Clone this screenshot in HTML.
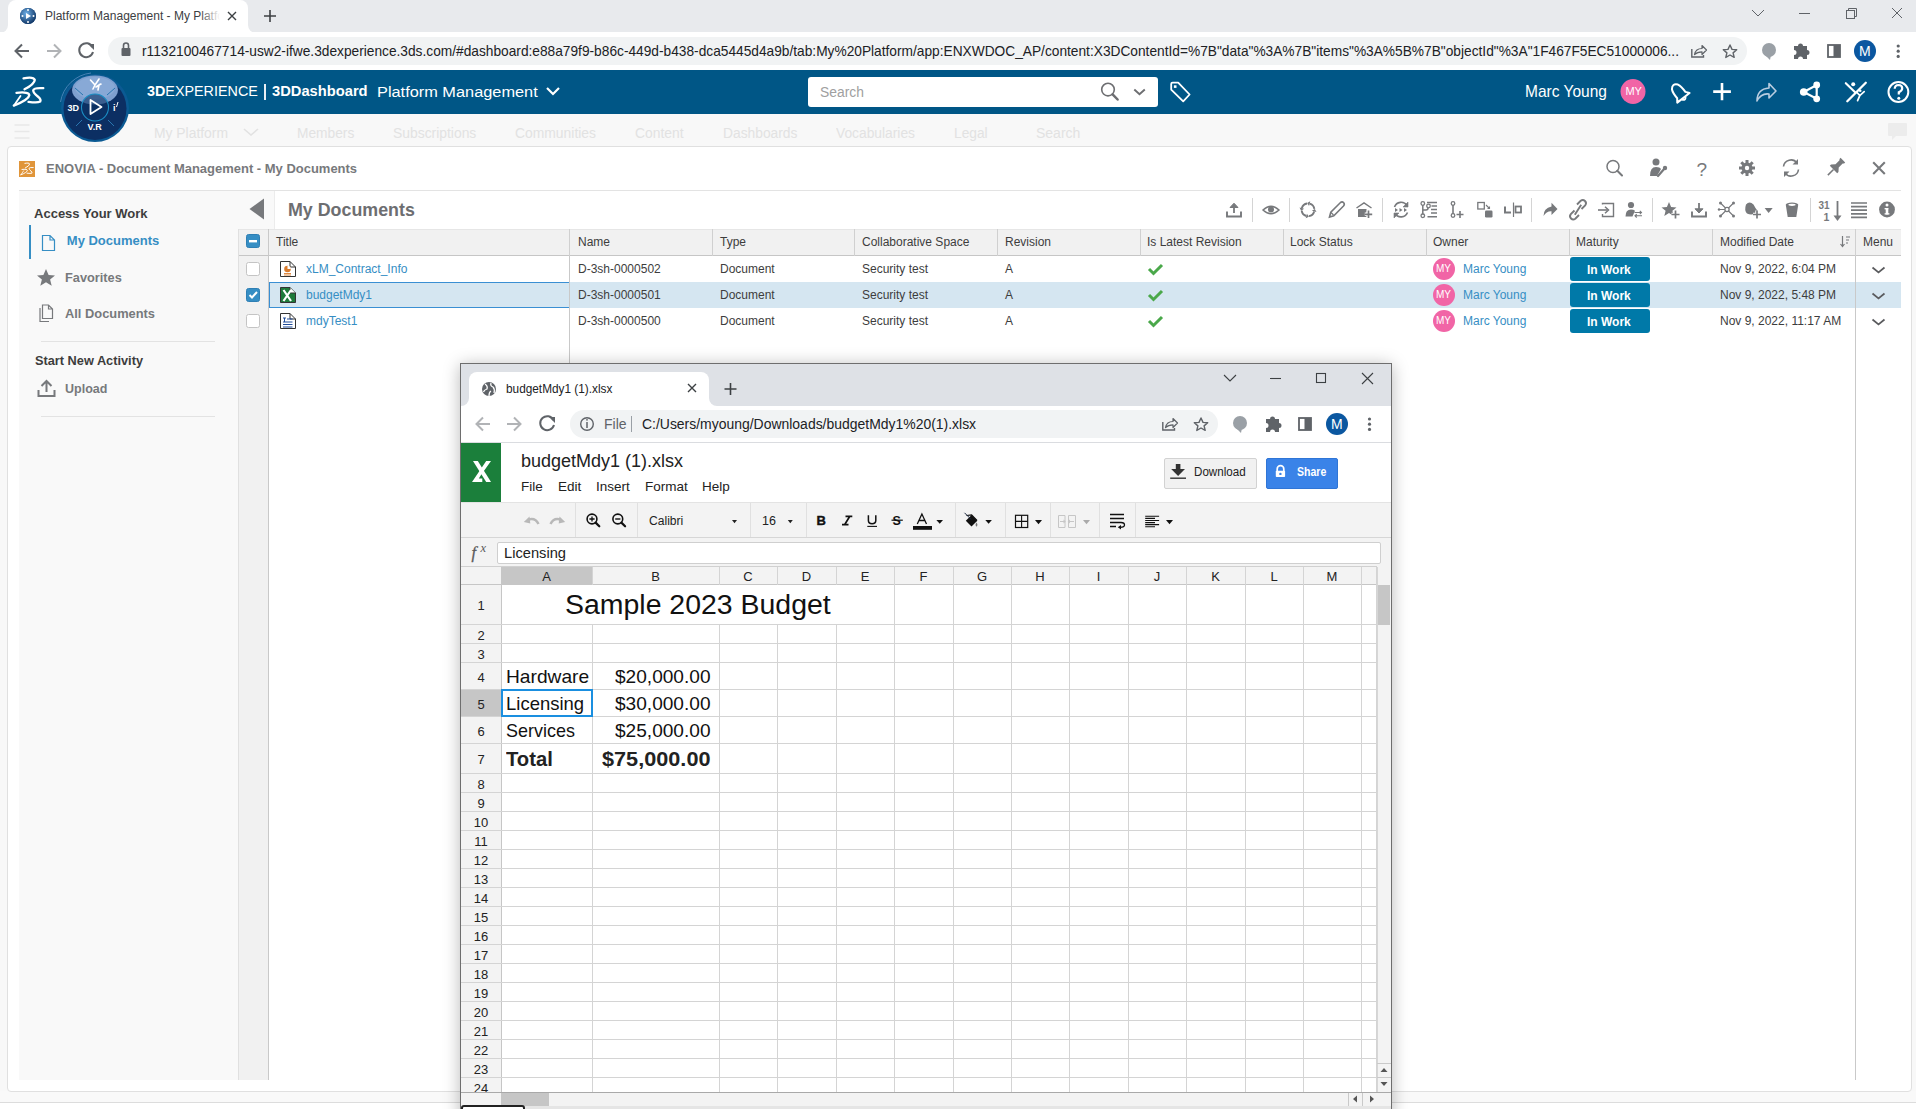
<!DOCTYPE html>
<html><head><meta charset="utf-8">
<style>
*{box-sizing:border-box;margin:0;padding:0}
html,body{width:1916px;height:1109px;overflow:hidden;background:#f8f8f8;font-family:"Liberation Sans",sans-serif;position:relative}
.a{position:absolute}
svg{position:absolute;overflow:visible}
.t{position:absolute;white-space:nowrap;line-height:1}
</style></head><body>
<!-- ============ CHROME MAIN ============ -->
<div class="a" style="left:0;top:0;width:1916px;height:33px;background:#fff"></div>
<div class="a" style="left:0;top:0;width:1916px;height:12px;background:#e8eaed"></div>
<div class="a" style="left:0;top:0;width:8px;height:33px;background:#e8eaed;border-radius:0 0 8px 0"></div>
<div class="a" style="left:248px;top:0;width:1668px;height:33px;background:#e8eaed;border-radius:0 0 0 8px"></div>
<div class="a" style="left:8px;top:0;width:240px;height:33px;background:#fff;border-radius:8px 8px 0 0"></div>
<div class="a" style="left:0;top:32px;width:1916px;height:38px;background:#fff"></div>
<div class="a" style="left:108px;top:37px;width:1639px;height:28px;background:#f1f3f4;border-radius:14px"></div>
<svg style="left:0;top:0" width="1916" height="70">
 <!-- favicon -->
 <circle cx="28" cy="16" r="8" fill="#1b4f8a"/><circle cx="28" cy="16" r="8" fill="url(#fg)"/>
 <defs><radialGradient id="fg" cx="0.4" cy="0.35" r="0.7"><stop offset="0" stop-color="#6fb0e8"/><stop offset="1" stop-color="#0b2f5e" stop-opacity="1"/></radialGradient></defs>
 <path d="M26 13 L31 16 L26 19 Z" fill="#fff"/>
 <circle cx="28" cy="10" r="1" fill="#fff"/><circle cx="28" cy="22" r="1" fill="#fff"/><circle cx="22.5" cy="16" r="1" fill="#fff"/><circle cx="33.5" cy="16" r="1" fill="#fff"/>
 <!-- tab close -->
 <path d="M228 12 L236 20 M236 12 L228 20" stroke="#3c4043" stroke-width="1.4"/>
 <!-- new tab + -->
 <path d="M270 10 V22 M264 16 H276" stroke="#3c4043" stroke-width="1.6"/>
 <!-- window controls -->
 <path d="M1752 10 L1758 16 L1764 10" stroke="#5f6368" stroke-width="1" fill="none"/>
 <path d="M1799 13.5 H1810" stroke="#5f6368" stroke-width="1"/>
 <rect x="1846.5" y="10.5" width="8" height="8" fill="none" stroke="#5f6368"/><path d="M1848.5 10.5 V8.5 H1856.5 V16.5 H1854.5" fill="none" stroke="#5f6368"/>
 <path d="M1892 8 L1902 18 M1902 8 L1892 18" stroke="#5f6368" stroke-width="1"/>
 <!-- back/fwd/reload -->
 <path d="M29 51 H16 M22 44.5 L15.5 51 L22 57.5" stroke="#5f6368" stroke-width="2" fill="none"/>
 <path d="M47 51 H60 M54 44.5 L60.5 51 L54 57.5" stroke="#b1b3b6" stroke-width="2" fill="none"/>
 <path d="M92.5 47 A7 7 0 1 0 93 52" stroke="#5f6368" stroke-width="2" fill="none"/><path d="M88 44 L94 44 L94 50 Z" fill="#5f6368"/>
 <!-- lock -->
 <rect x="121.5" y="48" width="9" height="8" rx="1" fill="#5f6368"/><path d="M123.5 48 V45.5 A2.5 2.5 0 0 1 128.5 45.5 V48" stroke="#5f6368" stroke-width="1.6" fill="none"/>
 <!-- share icon in omnibox -->
 <path d="M1691.8 49 V57 H1703.5 V55" stroke="#5f6368" stroke-width="1.4" fill="none"/><path d="M1694.5 54.5 C1695.5 49.5 1698.5 48.5 1702 48.5 V45.5 L1706.5 50 L1702 54.5 V51.8 C1698.8 51.8 1696.5 52.6 1694.5 54.5 Z" stroke="#5f6368" stroke-width="1.2" fill="none" stroke-linejoin="round"/>
 <!-- star -->
 <path d="M1730 45 L1732 49.4 L1736.7 49.8 L1733.1 52.9 L1734.2 57.4 L1730 55 L1725.8 57.4 L1726.9 52.9 L1723.3 49.8 L1728 49.4 Z" stroke="#5f6368" stroke-width="1.4" fill="none" stroke-linejoin="round"/>
 <!-- ext grey bubble -->
 <circle cx="1769" cy="50" r="7" fill="#9aa0a6"/><path d="M1765 55 L1770 60 L1771 55Z" fill="#9aa0a6"/>
 <!-- puzzle -->
 <path d="M1794 46 H1798 A2.5 2.5 0 0 1 1803 46 H1807 V50 A2.5 2.5 0 0 1 1807 55 V59 H1803 A2.5 2.5 0 0 0 1798 59 H1794 V55 A2.5 2.5 0 0 0 1794 50 Z" fill="#5f6368"/>
 <!-- sidebar -->
 <rect x="1828" y="45" width="12" height="12" fill="none" stroke="#5f6368" stroke-width="1.8"/><rect x="1833.5" y="45" width="6.5" height="12" fill="#5f6368"/>
 <!-- avatar -->
 <circle cx="1865" cy="51" r="11" fill="#0b57a0"/>
 <!-- dots -->
 <circle cx="1898.2" cy="46" r="1.6" fill="#5f6368"/><circle cx="1898.2" cy="51.2" r="1.6" fill="#5f6368"/><circle cx="1898.2" cy="56.4" r="1.6" fill="#5f6368"/>
</svg>
<div class="a" style="left:0;top:6px;width:220px;height:20px;overflow:hidden"><div class="t" style="left:44.5px;top:4px;font-size:12.5px;color:#3c4043;transform:scaleX(0.9613);transform-origin:0 0">Platform Management - My Platform</div></div>
<div class="a" style="left:200px;top:4px;width:20px;height:24px;background:linear-gradient(90deg,rgba(255,255,255,0),#fff)"></div>
<div class="t" style="left:1859px;top:44px;font-size:14px;color:#fff">M</div>
<div class="t" id="url" style="left:142px;top:43px;font-size:15px;color:#202124;transform:scaleX(0.9148);transform-origin:0 0">r1132100467714-usw2-ifwe.3dexperience.3ds.com/#dashboard:e88a79f9-b86c-449d-b438-dca5445d4a9b/tab:My%20Platform/app:ENXWDOC_AP/content:X3DContentId=%7B"data"%3A%7B"items"%3A%5B%7B"objectId"%3A"1F467F5EC51000006...</div>
<!-- ============ 3DS HEADER ============ -->
<div class="a" style="left:0;top:70px;width:1916px;height:44px;background:#005686"></div>
<div class="a" style="left:0;top:114px;width:1916px;height:32px;background:#f8f8f8"></div>
<div class="a" style="left:808px;top:77px;width:350px;height:30px;background:#fff;border-radius:3px"></div>
<svg style="left:0;top:0" width="1916" height="150">
 <!-- DS logo -->
 <g fill="none" stroke="#fff" stroke-linecap="round">
 <path d="M23.5 78.3 Q33.5 76.3 34.8 79.8 Q34.5 84 24.5 89.3" stroke-width="2.3"/>
 <path d="M16.5 92.8 Q29.5 91.5 29.3 95.3 Q28.5 100 13.8 105.6" stroke-width="2.3"/>
 <path d="M20.5 96 L14 105.4" stroke-width="1.8"/>
 <path d="M43.3 88.2 Q34 87.5 33.2 90.3 Q33.3 93 37.8 96.5 Q41.5 99.5 40.2 101.6 Q37.5 103 28.5 101.8" stroke-width="2.3"/>
 </g>
 <!-- compass -->
 <circle cx="95" cy="108" r="34" fill="#0b5a93"/>
 <path d="M60.5 102 A35 35 0 0 1 91 73" stroke="#4f86bb" stroke-width=".9" fill="none"/>
 <circle cx="95" cy="108.5" r="31.5" fill="#0c2f63"/>
 <ellipse cx="95" cy="90" rx="23" ry="14.5" fill="#7e9fcf"/>
 <ellipse cx="95" cy="88" rx="20" ry="11" fill="#8fb0da" opacity=".6"/>
 <circle cx="95" cy="107.5" r="13.5" fill="rgba(12,50,100,.6)" stroke="#1b8ec4" stroke-width="1.1"/>
 <path d="M90.5 100 L101.5 107 L90.5 114 Z" fill="none" stroke="#fff" stroke-width="1.8" stroke-linejoin="round"/>
 <path d="M75 88 L83 95 M115 88 L107 95 M76 126 L82 120 M114 126 L108 120" stroke="#2a76b0" stroke-width="1"/>
 <text x="67.5" y="111" font-family="Liberation Sans" font-weight="bold" font-size="9" fill="#fff">3D</text>
 <text x="113" y="111" font-family="Liberation Sans" font-weight="bold" font-size="9" fill="#fff">i</text>
 <path d="M118 102 L116.5 107" stroke="#fff" stroke-width="1"/>
 <text x="87.5" y="130" font-family="Liberation Sans" font-weight="bold" font-size="9" fill="#fff">V.R</text>
 <path d="M90.5 80 L95 85 L93 89 M95 85 L99 79 M96 87 L99 85 L98 90 M99 85 L101 84" stroke="#fff" stroke-width="1.6" fill="none" stroke-linecap="round"/>
 <!-- header chevron -->
 <path d="M547 88 L553 94 L559 88" stroke="#fff" stroke-width="2.2" fill="none"/>
 <!-- search icons -->
 <circle cx="1108" cy="89.6" r="6.3" stroke="#6d6e71" stroke-width="1.6" fill="none"/><path d="M1112.6 94.3 L1117.6 99.5" stroke="#6d6e71" stroke-width="2.5" stroke-linecap="round"/>
 <path d="M1134.3 89.5 L1139.5 94.3 L1144.8 89.5" stroke="#6d6e71" stroke-width="1.9" fill="none"/>
 <!-- tag -->
 <path d="M1171.2 84 Q1171.2 82.6 1172.6 82.6 L1178.2 82.6 L1189.6 94.5 L1183.2 101.3 L1171.2 89.6 Z" stroke="#fff" stroke-width="1.8" fill="none" stroke-linejoin="round"/>
 <rect x="1173.9" y="85.3" width="2.6" height="2.6" fill="#fff"/>
 <!-- MY avatar -->
 <circle cx="1633" cy="91.5" r="12.5" fill="#f165a6"/>
 <!-- bell -->
 <g transform="translate(1678.5 91.5) rotate(-38)"><path d="M-5.2 4.5 Q-5.5 -2.5 -3.8 -5.8 Q0 -10.5 3.8 -5.8 Q5.5 -2.5 5.2 4.5 L7.8 8 H-7.8 Z" stroke="#fff" stroke-width="2" fill="none" stroke-linejoin="round"/><path d="M-2.3 8.5 Q0 12 2.3 8.5" stroke="#fff" stroke-width="1.8" fill="none"/></g>
 <!-- plus -->
 <path d="M1722 83 V100.2 M1713.2 91.6 H1730.9" stroke="#fff" stroke-width="2.6"/>
 <!-- forward arrow (faded) -->
 <path d="M1757 101 Q1757 89 1769 88 V83.5 L1776 91 L1769 98 V94 Q1761 93 1757 101Z" stroke="#b9cde0" stroke-width="1.6" fill="none" stroke-linejoin="round"/>
 <!-- share -->
 <path d="M1803.7 92 L1816.7 85 L1816.7 98.8 Z" stroke="#fff" stroke-width="2.2" fill="none"/>
 <circle cx="1803.7" cy="92" r="3.8" fill="#fff"/><circle cx="1816.7" cy="85" r="3.4" fill="#fff"/><circle cx="1816.7" cy="98.8" r="3.4" fill="#fff"/>
 <!-- compass person -->
 <path d="M1865.8 82.8 L1847.3 101.2" stroke="#fff" stroke-width="2.3" stroke-linecap="round"/>
 <path d="M1845.8 83.2 L1855.6 92.8" stroke="#fff" stroke-width="2.1" stroke-linecap="round"/>
 <circle cx="1853.2" cy="84.2" r="2" fill="#fff"/>
 <path d="M1856.8 92.2 L1859.8 95.6 L1864.2 91.6 M1859.8 95.6 L1857.6 100.6" stroke="#fff" stroke-width="1.7" fill="none" stroke-linecap="round"/>
 <circle cx="1860.2" cy="90.8" r="1.3" fill="#fff"/>
 <!-- help -->
 <circle cx="1898.4" cy="92" r="9.9" stroke="#fff" stroke-width="2" fill="none"/>
 <path d="M1894.7 88.8 Q1894.9 85 1898.5 85 Q1902.2 85.1 1902.2 88.3 Q1902.2 90.8 1898.8 92.3 V94.6" stroke="#fff" stroke-width="2.2" fill="none"/>
 <circle cx="1898.8" cy="98.2" r="1.5" fill="#fff"/>
 <!-- nav hamburger faded -->
 <path d="M14.5 125 H29.5 M14.5 131.5 H29.5 M14.5 138 H29.5" stroke="#e8e8e8" stroke-width="1.6"/>
 <path d="M244 129 L251 135 L258 129" stroke="#e2e2e2" stroke-width="1.6" fill="none"/>
 <!-- comment icon right -->
 <rect x="1888" y="123" width="19" height="13" rx="1" fill="#ececec"/><path d="M1892 136 L1892 140 L1896 136" fill="#ececec"/>
</svg>
<div class="t" style="left:146.7px;top:83px;font-size:15.5px;color:#fff;transform:scaleX(0.9253);transform-origin:0 0"><b>3D</b>EXPERIENCE</div>
<div class="a" style="left:264px;top:84px;width:2px;height:16px;background:#e8eef4"></div>
<div class="t" style="left:271.8px;top:83px;font-size:15.5px;color:#fff;transform:scaleX(0.9486);transform-origin:0 0"><b>3DDashboard</b></div>
<div class="t" style="left:376.5px;top:84px;font-size:15.5px;color:#fff;transform:scaleX(1.0538);transform-origin:0 0">Platform Management</div>
<div class="t" style="left:819.6px;top:85px;font-size:14px;color:#a0a0a0;transform:scaleX(0.9896);transform-origin:0 0">Search</div>
<div class="t" style="left:1524.5px;top:83px;font-size:17px;color:#fff;transform:scaleX(0.9121);transform-origin:0 0">Marc Young</div>
<div class="t" style="left:1625.4px;top:86px;font-size:11px;color:#fff;transform:scaleX(1.0000);transform-origin:0 0">MY</div>
<div class="t" style="left:154px;top:126px;font-size:14px;color:#e2e2e2;transform:scaleX(0.9908);transform-origin:0 0">My Platform</div>
<div class="t" style="left:296.7px;top:126px;font-size:14px;color:#e2e2e2;transform:scaleX(0.9818);transform-origin:0 0">Members</div>
<div class="t" style="left:392.7px;top:126px;font-size:14px;color:#e2e2e2;transform:scaleX(0.9911);transform-origin:0 0">Subscriptions</div>
<div class="t" style="left:515px;top:126px;font-size:14px;color:#e2e2e2;transform:scaleX(0.9914);transform-origin:0 0">Communities</div>
<div class="t" style="left:635px;top:126px;font-size:14px;color:#e2e2e2;transform:scaleX(0.9888);transform-origin:0 0">Content</div>
<div class="t" style="left:722.6px;top:126px;font-size:14px;color:#e2e2e2;transform:scaleX(0.9854);transform-origin:0 0">Dashboards</div>
<div class="t" style="left:836px;top:126px;font-size:14px;color:#e2e2e2;transform:scaleX(0.9854);transform-origin:0 0">Vocabularies</div>
<div class="t" style="left:954px;top:126px;font-size:14px;color:#e2e2e2;transform:scaleX(0.9806);transform-origin:0 0">Legal</div>
<div class="t" style="left:1036px;top:126px;font-size:14px;color:#e2e2e2">Search</div>
<!-- ============ WIDGET CARD ============ -->
<div class="a" style="left:0;top:1091px;width:1916px;height:18px;background:#f9f9f9;border-top:0"></div>
<div class="a" style="left:0;top:1102px;width:1916px;height:7px;background:#fff;border-top:1px solid #dcdcdc"></div>
<div class="a" style="left:7px;top:146px;width:1905px;height:946px;background:#fff;border:1px solid #e0e0e0;border-radius:4px"></div>
<div class="a" style="left:19px;top:190px;width:1882px;height:1px;background:#e3e3e3"></div>
<!-- left nav -->
<div class="a" style="left:19px;top:191px;width:219px;height:889px;background:#f9f9f9"></div>
<div class="a" style="left:238px;top:191px;width:37px;height:38px;background:#f9f9f9;border-right:1px solid #ececec"></div>
<div class="a" style="left:238px;top:229px;width:31px;height:851px;background:#f1f1f1;border-right:1px solid #c9c9c9;border-left:1px solid #e0e0e0"></div>
<div class="a" style="left:29px;top:225px;width:2px;height:34px;background:#368ec4"></div>
<div class="a" style="left:41px;top:341px;width:174px;height:1px;background:#e3e3e3"></div>
<div class="a" style="left:41px;top:416px;width:174px;height:1px;background:#e3e3e3"></div>
<div class="t" style="left:33.9px;top:207px;font-size:13px;font-weight:bold;color:#3d3d3d;transform:scaleX(1.0013);transform-origin:0 0">Access Your Work</div>
<div class="t" style="left:66.8px;top:234px;font-size:13px;font-weight:bold;color:#368ec4">My Documents</div>
<div class="t" style="left:64.9px;top:271px;font-size:13px;font-weight:bold;color:#77797c;transform:scaleX(0.9825);transform-origin:0 0">Favorites</div>
<div class="t" style="left:65px;top:307px;font-size:13px;font-weight:bold;color:#77797c;transform:scaleX(0.9888);transform-origin:0 0">All Documents</div>
<div class="t" style="left:35.3px;top:354px;font-size:13px;font-weight:bold;color:#3d3d3d;transform:scaleX(0.9813);transform-origin:0 0">Start New Activity</div>
<div class="t" style="left:65px;top:382px;font-size:13px;font-weight:bold;color:#77797c;transform:scaleX(0.9623);transform-origin:0 0">Upload</div>
<div class="t" style="left:46.2px;top:162px;font-size:13px;font-weight:bold;color:#77797c;transform:scaleX(0.9985);transform-origin:0 0">ENOVIA - Document Management - My Documents</div>
<div class="t" style="left:287.5px;top:201px;font-size:18px;font-weight:bold;color:#6d6e71;transform:scaleX(0.9904);transform-origin:0 0">My&nbsp;Documents</div>
<svg style="left:0;top:0" width="1916" height="440">
 <!-- enovia icon -->
 <rect x="19" y="161" width="16" height="16" fill="#e0953a"/>
 <g fill="none" stroke="#fff" stroke-linecap="round" transform="translate(20.5 162.8) scale(0.42) translate(-13 -77)">
 <path d="M23.5 78.3 Q33.5 76.3 34.8 79.8 Q34.5 84 24.5 89.3" stroke-width="2.3"/>
 <path d="M16.5 92.8 Q29.5 91.5 29.3 95.3 Q28.5 100 13.8 105.6" stroke-width="2.3"/>
 <path d="M20.5 96 L14 105.4" stroke-width="1.8"/>
 <path d="M43.3 88.2 Q34 87.5 33.2 90.3 Q33.3 93 37.8 96.5 Q41.5 99.5 40.2 101.6 Q37.5 103 28.5 101.8" stroke-width="2.3"/>
 </g>
 <!-- my doc icon -->
 <path d="M42.5 235.5 H50 L54.5 240 V250.5 H42.5 Z M50 235.5 V240 H54.5" stroke="#368ec4" stroke-width="1.2" fill="none"/>
 <!-- star -->
 <path d="M46 269 L48.6 275 L55 275.4 L50.1 279.5 L51.7 285.8 L46 282.3 L40.3 285.8 L41.9 279.5 L37 275.4 L43.4 275 Z" fill="#77797c"/>
 <!-- all docs -->
 <path d="M42.5 305 H48.5 L52.5 309 V318.5 H42.5 Z M48.5 305 V309 H52.5" stroke="#77797c" stroke-width="1.2" fill="none"/>
 <path d="M40 308 V321.5 H49" stroke="#77797c" stroke-width="1.2" fill="none"/>
 <!-- upload -->
 <path d="M46.5 381 V392 M41.5 386 L46.5 381 L51.5 386" stroke="#77797c" stroke-width="2" fill="none"/>
 <path d="M38.5 390 V396 H54.5 V390" stroke="#77797c" stroke-width="2" fill="none"/>
 <!-- collapse triangle -->
 <path d="M264 198.5 V219.5 L249.5 209 Z" fill="#77797c"/>
 <!-- header right icons -->
 <circle cx="1613" cy="166.5" r="6" stroke="#77797c" stroke-width="1.5" fill="none"/><path d="M1617.3 170.8 L1622 175.5" stroke="#77797c" stroke-width="2" stroke-linecap="round"/>
 <circle cx="1656" cy="162" r="3.5" fill="#77797c"/><path d="M1650 176 Q1650 167 1656 167 Q1660 167 1661 169 L1657 176 Z" fill="#77797c"/><path d="M1658 176 L1665 168" stroke="#77797c" stroke-width="2.2" stroke-linecap="round"/><circle cx="1665" cy="168" r="2.2" fill="#77797c"/>
 <text x="1696.5" y="176" font-family="Liberation Sans" font-size="19" fill="#77797c">?</text>
 <g transform="translate(1747 168)"><circle r="5.5" fill="#77797c"/><circle r="2.2" fill="#fff"/><path d="M0 -8 V8 M-8 0 H8 M-5.7 -5.7 L5.7 5.7 M-5.7 5.7 L5.7 -5.7" stroke="#77797c" stroke-width="3"/><circle r="2.2" fill="#fff"/></g>
 <path d="M1783.5 166.5 A7.5 7.5 0 0 1 1797 163 M1798.5 169.5 A7.5 7.5 0 0 1 1785 173" stroke="#77797c" stroke-width="1.6" fill="none"/><path d="M1798 159 V164.5 H1792.5Z M1784 177 V171.5 H1789.5Z" fill="#77797c"/>
 <g transform="translate(1835.8 167.2) rotate(45) scale(1.25)"><path d="M-2.6 -8 H2.6 V-6.8 L1.8 -6 V-1.5 L4.2 1.2 V2.6 H-4.2 V1.2 L-1.8 -1.5 V-6 L-2.6 -6.8 Z" fill="#77797c"/><path d="M0 2.6 V9" stroke="#77797c" stroke-width="1.2"/></g>
 <path d="M1873.2 162.3 L1884.8 173.9 M1884.8 162.3 L1873.2 173.9" stroke="#77797c" stroke-width="2.1"/>
 <!-- toolbar separators -->
 <path d="M1252.5 198 V222 M1289.5 198 V222 M1382.5 198 V222 M1531.5 198 V222 M1652.5 198 V222 M1810.5 198 V222" stroke="#d4d4d4" stroke-width="1"/>
 <g fill="none" stroke="#77797c" stroke-width="1.8">
  <!-- upload -->
  <path d="M1234 205 V213"/><path d="M1230 207.5 L1234 203.2 L1238 207.5Z" fill="#77797c" stroke-width="1"/><path d="M1227 211.5 V216.5 H1241 V211.5" stroke-width="1.9"/>
  <!-- eye -->
  <path d="M1263 210 Q1271 202.5 1279 210 Q1271 217.5 1263 210Z" stroke-width="1.5"/><circle cx="1271" cy="209.5" r="3" fill="#77797c" stroke="none"/>
  <!-- sync ring -->
  <path d="M1301.82 208.14 A6.4 6.4 0 0 1 1307.11 203.46 M1309.66 203.62 A6.4 6.4 0 0 1 1314.34 208.91 M1314.18 211.46 A6.4 6.4 0 0 1 1308.89 216.14 M1306.34 215.98 A6.4 6.4 0 0 1 1301.66 210.69" stroke-width="1.9"/><path d="M1301.15 210.65 L1299.50 207.52 L1304.14 208.76Z M1307.15 202.95 L1310.28 201.30 L1309.04 205.94Z M1314.85 208.95 L1316.50 212.08 L1311.86 210.84Z M1308.85 216.65 L1305.72 218.30 L1306.96 213.66Z" fill="#77797c" stroke="none"/>
  <!-- pencil -->
  <path d="M1329.5 217 L1330.8 212.2 L1340.5 202.5 Q1342.2 201.2 1343.7 202.8 Q1345 204.3 1343.5 206 L1333.8 215.7 Z" stroke-width="1.6"/><path d="M1331 212.5 L1333.5 215" stroke-width="1.2"/>
  <!-- house+ -->
  <path d="M1356.5 208 L1364 202.8 L1371.5 208" stroke-width="1.4"/><rect x="1358" y="209" width="8.5" height="8" fill="#77797c" stroke="none"/><path d="M1368.5 210.5 V218 M1364.8 214.3 H1372.2" stroke="#fff" stroke-width="3.6"/><path d="M1368.5 210.5 V218 M1364.8 214.3 H1372.2" stroke-width="1.7"/>
  <!-- refresh dots -->
  <path d="M1394.5 207 A7 7 0 0 1 1407 205.5 M1407.5 212.5 A7 7 0 0 1 1395 213.5" stroke-width="1.6"/><path d="M1408 202 V207 H1403Z M1394 218 V213 H1399Z" fill="#77797c" stroke-width=".6"/>
  <path d="M1395 208 L1398 210 L1395 212Z M1399.5 208 L1402.5 210 L1399.5 212Z M1404 208 L1407 210 L1404 212Z" fill="#77797c" stroke="none"/>
  <!-- tree -->
  <path d="M1422.8 205 V214.5 M1422.8 210 H1426 Q1428 210 1428 208" stroke-width="1.5"/><circle cx="1422.8" cy="203.5" r="1.8" stroke-width="1.3" fill="#fff"/><circle cx="1422.8" cy="215.8" r="1.8" stroke-width="1.3" fill="#fff"/><circle cx="1428.5" cy="206" r="1.8" stroke-width="1.3" fill="#fff"/>
  <path d="M1427 202.5 H1437 M1431.5 206 H1437 M1431 209.5 H1437 M1431 213 H1437 M1427.5 216.8 H1437" stroke-width="1.5"/>
  <!-- branch -->
  <path d="M1453 205 V214.5" stroke-width="1.6"/><circle cx="1453" cy="203.5" r="1.8" stroke-width="1.3" fill="#fff"/><circle cx="1453" cy="215.5" r="1.8" stroke-width="1.3" fill="#fff"/><path d="M1460 211 V218 M1456.5 214.5 H1463.5" stroke-width="1.6"/>
  <!-- squares -->
  <rect x="1477.8" y="202.5" width="6.5" height="6.5" stroke-width="1.3"/><rect x="1485" y="210.5" width="7.5" height="7" fill="#77797c" stroke="none" rx="1.2"/><path d="M1486 205 L1489.5 208.5 M1489.5 206.5 V208.5 H1487.5" stroke-width="1.1"/>
  <!-- split -->
  <path d="M1513.5 202.5 V217" stroke-width="1.2"/><path d="M1505 206.5 V212.5 H1511" stroke-width="2"/><rect x="1515.5" y="206.5" width="5.5" height="6" stroke-width="1.8"/>
  <!-- arrow -->
  <path d="M1543.5 216 Q1543.5 208 1551.5 206.5 V202.8 L1557.5 209 L1551.5 215 V211.3 Q1546.5 211 1543.5 216Z" fill="#77797c" stroke="none"/>
  <!-- link -->
  <path d="M1574.5 210.5 L1570.8 214.2 A3.2 3.2 0 0 0 1575.3 218.7 L1579 215 M1581.5 209 L1585.2 205.3 A3.2 3.2 0 0 0 1580.7 200.8 L1577 204.5 M1574.8 214.7 L1581.2 204.8" stroke-width="1.9"/>
  <!-- enter -->
  <path d="M1602.5 204.5 V203.5 H1613.5 V216.5 H1602.5 V214" stroke-width="1.4"/><path d="M1598 210 H1607.5" stroke-width="1.6"/><path d="M1605 206.8 L1608.5 210 L1605 213.2" stroke-width="1.5"/>
  <!-- person arrows -->
  <circle cx="1631" cy="205" r="3.1" fill="#77797c" stroke="none"/><path d="M1625.5 216.5 Q1625.5 209.5 1631 209.5 Q1633.5 209.5 1635 210.8 L1632.5 216.5Z" fill="#77797c" stroke="none"/><path d="M1634.5 212.5 H1641.5 M1639.8 210.8 L1641.5 212.5 L1639.8 214.2 M1642 215.8 H1635 M1636.7 214.1 L1635 215.8 L1636.7 217.5" stroke-width="1.1"/>
  <!-- star + -->
  <path d="M1669 202 L1671.1 207.1 L1676.5 207.4 L1672.4 210.8 L1673.7 216 L1669 213.1 L1664.3 216 L1665.6 210.8 L1661.5 207.4 L1666.9 207.1 Z" fill="#77797c" stroke="none"/><path d="M1675.5 210.5 V218.5 M1671.5 214.5 H1679.5" stroke="#fff" stroke-width="3.4"/><path d="M1675.5 210.5 V218.5 M1671.5 214.5 H1679.5" stroke-width="1.7"/>
  <!-- download -->
  <path d="M1699 203 V211"/><path d="M1695 208.8 L1699 213 L1703 208.8Z" fill="#77797c" stroke-width="1"/><path d="M1692 211.5 V216.5 H1706 V211.5" stroke-width="1.9"/>
  <!-- network -->
  <path d="M1727 209.5 L1720.5 203 M1727 209.5 L1733.5 203 M1727 209.5 L1720.5 216 M1727 209.5 L1733.5 216 M1727 209.5 L1719 209.5" stroke-width="1.1"/><circle cx="1727" cy="209.5" r="2.1" stroke-width="1.3" fill="#fff"/><circle cx="1720.5" cy="203" r="1.5" fill="#77797c" stroke="none"/><circle cx="1733.5" cy="203" r="1.5" fill="#77797c" stroke="none"/><circle cx="1720.5" cy="216" r="1.5" fill="#77797c" stroke="none"/><circle cx="1733.5" cy="216" r="1.5" fill="#77797c" stroke="none"/><circle cx="1719" cy="209.5" r="1.2" fill="#77797c" stroke="none"/>
  <!-- bell + -->
  <path d="M1746 204.5 Q1749.5 200.5 1753.5 204.5 Q1755.5 208.5 1758 211.5 Q1753 216 1747 213.5 Q1744 210.5 1746 204.5Z" fill="#77797c" stroke="none"/><path d="M1757 210.5 V218.5 M1753 214.5 H1761" stroke="#fff" stroke-width="3.4"/><path d="M1757 210.5 V218.5 M1753 214.5 H1761" stroke-width="1.7"/><path d="M1764.6 208 H1772.7 L1768.65 213Z" fill="#77797c" stroke="none"/>
  <!-- trash -->
  <path d="M1786 206 H1798 L1796.3 217 H1787.7Z" fill="#77797c" stroke="none"/><ellipse cx="1792" cy="205" rx="6.3" ry="2.6" fill="#77797c" stroke="none"/><ellipse cx="1792" cy="204.8" rx="3.6" ry="1.1" fill="#fff" stroke="none"/>
  <!-- info -->
  <circle cx="1887" cy="209.5" r="7.9" fill="#77797c" stroke="none"/>
  <!-- list -->
  <path d="M1851 203 H1867 M1851 206.6 H1867 M1851 210.2 H1867 M1851 213.8 H1867 M1851 217.4 H1867" stroke-width="1.7"/>
  <!-- sort 31 arrow -->
  <path d="M1837.5 201 V218"/><path d="M1833.5 215.5 L1837.5 221 L1841.5 215.5Z" fill="#77797c" stroke="none"/>
 </g>
 <rect x="1885.7" y="208" width="2.6" height="6.5" fill="#fff"/><rect x="1884.6" y="208" width="3.7" height="1.4" fill="#fff"/><rect x="1884.6" y="213.2" width="4.8" height="1.3" fill="#fff"/><circle cx="1887" cy="205" r="1.5" fill="#fff"/>
 <text x="1818.5" y="209.5" font-family="Liberation Sans" font-weight="bold" font-size="10.5" fill="#77797c" transform="translate(1818.5 0) scale(0.95 1) translate(-1818.5 0)">31</text>
 <text x="1823.5" y="221" font-family="Liberation Sans" font-weight="bold" font-size="10.5" fill="#77797c">1</text>
</svg>
<!-- ============ TABLE ============ -->
<div class="a" style="left:239px;top:229px;width:1662px;height:27px;background:#f1f1f1;border-bottom:1px solid #c6c6c6;border-top:1px solid #e6e6e6"></div>
<div class="t" style="left:276px;top:236px;font-size:12px;color:#3d3d3d">Title</div>
<div class="a" style="left:569px;top:229px;width:1px;height:27px;background:#d0d0d0"></div>
<div class="t" style="left:578px;top:236px;font-size:12px;color:#3d3d3d">Name</div>
<div class="a" style="left:712px;top:229px;width:1px;height:27px;background:#d0d0d0"></div>
<div class="t" style="left:720px;top:236px;font-size:12px;color:#3d3d3d">Type</div>
<div class="a" style="left:854px;top:229px;width:1px;height:27px;background:#d0d0d0"></div>
<div class="t" style="left:862px;top:236px;font-size:12px;color:#3d3d3d">Collaborative Space</div>
<div class="a" style="left:997px;top:229px;width:1px;height:27px;background:#d0d0d0"></div>
<div class="t" style="left:1005px;top:236px;font-size:12px;color:#3d3d3d">Revision</div>
<div class="a" style="left:1140px;top:229px;width:1px;height:27px;background:#d0d0d0"></div>
<div class="t" style="left:1147px;top:236px;font-size:12px;color:#3d3d3d">Is Latest Revision</div>
<div class="a" style="left:1283px;top:229px;width:1px;height:27px;background:#d0d0d0"></div>
<div class="t" style="left:1290px;top:236px;font-size:12px;color:#3d3d3d">Lock Status</div>
<div class="a" style="left:1426px;top:229px;width:1px;height:27px;background:#d0d0d0"></div>
<div class="t" style="left:1433px;top:236px;font-size:12px;color:#3d3d3d">Owner</div>
<div class="a" style="left:1569px;top:229px;width:1px;height:27px;background:#d0d0d0"></div>
<div class="t" style="left:1576px;top:236px;font-size:12px;color:#3d3d3d">Maturity</div>
<div class="a" style="left:1712px;top:229px;width:1px;height:27px;background:#d0d0d0"></div>
<div class="t" style="left:1720px;top:236px;font-size:12px;color:#3d3d3d">Modified Date</div>
<div class="a" style="left:1855px;top:229px;width:1px;height:27px;background:#d0d0d0"></div>
<div class="t" style="left:1863px;top:236px;font-size:12px;color:#3d3d3d">Menu</div>
<div class="a" style="left:268px;top:229px;width:1px;height:851px;background:#c9c9c9"></div>
<div class="a" style="left:269px;top:282px;width:1632px;height:26px;background:#d5e6f1"></div>
<div class="a" style="left:269px;top:282px;width:301px;height:26px;border:1px solid #3a8fd3"></div>
<div class="a" style="left:569px;top:256px;width:1px;height:120px;background:#c9c9c9"></div>
<div class="a" style="left:1855px;top:256px;width:1px;height:824px;background:#c9c9c9"></div>
<div class="t" style="left:306px;top:263px;font-size:12px;color:#368ec4">xLM_Contract_Info</div>
<div class="t" style="left:578px;top:263px;font-size:12px;color:#3d3d3d">D-3sh-0000502</div>
<div class="t" style="left:720px;top:263px;font-size:12px;color:#3d3d3d">Document</div>
<div class="t" style="left:862px;top:263px;font-size:12px;color:#3d3d3d">Security test</div>
<div class="t" style="left:1005px;top:263px;font-size:12px;color:#3d3d3d">A</div>
<div class="t" style="left:1463px;top:263px;font-size:12px;color:#368ec4">Marc Young</div>
<div class="a" style="left:1570px;top:257px;width:80px;height:24px;background:#0079a8;border-radius:3px"></div>
<div class="t" style="left:1587px;top:264px;font-size:12px;font-weight:bold;color:#fff">In Work</div>
<div class="t" style="left:1720px;top:263px;font-size:12px;color:#3d3d3d">Nov 9, 2022, 6:04 PM</div>
<div class="a" style="left:1433px;top:258px;width:22px;height:22px;border-radius:50%;background:#f165a6"></div>
<div class="t" style="left:1436px;top:264px;font-size:10px;color:#fff">MY</div>
<div class="t" style="left:306px;top:289px;font-size:12px;color:#368ec4">budgetMdy1</div>
<div class="t" style="left:578px;top:289px;font-size:12px;color:#3d3d3d">D-3sh-0000501</div>
<div class="t" style="left:720px;top:289px;font-size:12px;color:#3d3d3d">Document</div>
<div class="t" style="left:862px;top:289px;font-size:12px;color:#3d3d3d">Security test</div>
<div class="t" style="left:1005px;top:289px;font-size:12px;color:#3d3d3d">A</div>
<div class="t" style="left:1463px;top:289px;font-size:12px;color:#368ec4">Marc Young</div>
<div class="a" style="left:1570px;top:283px;width:80px;height:24px;background:#0079a8;border-radius:3px"></div>
<div class="t" style="left:1587px;top:290px;font-size:12px;font-weight:bold;color:#fff">In Work</div>
<div class="t" style="left:1720px;top:289px;font-size:12px;color:#3d3d3d">Nov 9, 2022, 5:48 PM</div>
<div class="a" style="left:1433px;top:284px;width:22px;height:22px;border-radius:50%;background:#f165a6"></div>
<div class="t" style="left:1436px;top:290px;font-size:10px;color:#fff">MY</div>
<div class="t" style="left:306px;top:315px;font-size:12px;color:#368ec4">mdyTest1</div>
<div class="t" style="left:578px;top:315px;font-size:12px;color:#3d3d3d">D-3sh-0000500</div>
<div class="t" style="left:720px;top:315px;font-size:12px;color:#3d3d3d">Document</div>
<div class="t" style="left:862px;top:315px;font-size:12px;color:#3d3d3d">Security test</div>
<div class="t" style="left:1005px;top:315px;font-size:12px;color:#3d3d3d">A</div>
<div class="t" style="left:1463px;top:315px;font-size:12px;color:#368ec4">Marc Young</div>
<div class="a" style="left:1570px;top:309px;width:80px;height:24px;background:#0079a8;border-radius:3px"></div>
<div class="t" style="left:1587px;top:316px;font-size:12px;font-weight:bold;color:#fff">In Work</div>
<div class="t" style="left:1720px;top:315px;font-size:12px;color:#3d3d3d">Nov 9, 2022, 11:17 AM</div>
<div class="a" style="left:1433px;top:310px;width:22px;height:22px;border-radius:50%;background:#f165a6"></div>
<div class="t" style="left:1436px;top:316px;font-size:10px;color:#fff">MY</div>
<svg style="left:0;top:0" width="1916" height="340">
<rect x="246.5" y="234.5" width="13" height="13" rx="2" fill="#368ec4" stroke="#2f7fb4"/><rect x="249" y="240" width="8" height="2.4" fill="#fff"/>
<rect x="246.5" y="262.5" width="13" height="13" rx="2" fill="#fff" stroke="#c4c4c4"/>
<path d="M1149 269 L1153.5 273.5 L1162 265" stroke="#4aa84a" stroke-width="3" fill="none"/>
<path d="M1872.5 267.5 L1878.5 272.5 L1884.5 267.5" stroke="#5a5b5e" stroke-width="1.7" fill="none"/>
<rect x="246.5" y="288.5" width="13" height="13" rx="2" fill="#368ec4" stroke="#2f7fb4"/><path d="M249.5 295 L252 297.5 L257 292" stroke="#fff" stroke-width="2" fill="none"/>
<path d="M1149 295 L1153.5 299.5 L1162 291" stroke="#4aa84a" stroke-width="3" fill="none"/>
<path d="M1872.5 293.5 L1878.5 298.5 L1884.5 293.5" stroke="#5a5b5e" stroke-width="1.7" fill="none"/>
<rect x="246.5" y="314.5" width="13" height="13" rx="2" fill="#fff" stroke="#c4c4c4"/>
<path d="M1149 321 L1153.5 325.5 L1162 317" stroke="#4aa84a" stroke-width="3" fill="none"/>
<path d="M1872.5 319.5 L1878.5 324.5 L1884.5 319.5" stroke="#5a5b5e" stroke-width="1.7" fill="none"/>
<path d="M280.5 261.5 H290 L295.5 267 V276.5 H280.5 Z" fill="#fff" stroke="#333" stroke-width="1"/><path d="M290 261.5 V267 H295.5" fill="none" stroke="#333"/><circle cx="287.5" cy="269" r="3.3" fill="#d97a2b"/><path d="M287.5 269 V265.7 A3.3 3.3 0 0 1 290.8 269Z" fill="#fff"/><path d="M284 273.5 H291 M284 275 H291" stroke="#d97a2b" stroke-width=".9"/>
<path d="M280.5 287.5 H290 L295.5 293 V302.5 H280.5 Z" fill="#1e7a3a" stroke="#333" stroke-width="1"/><path d="M290 287.5 V293 H295.5" fill="#fff" stroke="#333"/><path d="M283.5 290 L291 301 M291 290 L283.5 301" stroke="#fff" stroke-width="2.2"/>
<path d="M280.5 313.5 H290 L295.5 319 V328.5 H280.5 Z" fill="#fff" stroke="#333" stroke-width="1"/><path d="M290 313.5 V319 H295.5" fill="none" stroke="#333"/><path d="M283 318 H286 M284.5 318 V322 M287 319 H292.5 M283 322 H292.5 M283 324.5 H292.5 M283 327 H292.5" stroke="#1f4b99" stroke-width="1"/>
<path d="M1842.5 236 V246 M1840.5 244 L1842.5 246.5 L1844.5 244 M1846 237 H1850 M1846 240 H1849 M1846 243 H1848" stroke="#77797c" stroke-width="1.2" fill="none"/>
</svg><!-- ============ SPREADSHEET WINDOW ============ -->
<div class="a" style="left:460px;top:363px;width:932px;height:760px;background:#fff;border:1px solid #6e6e6e;box-shadow:0 2px 16px rgba(0,0,0,.28)"></div>
<div class="a" style="left:461px;top:364px;width:930px;height:42px;background:#fff"></div>
<div class="a" style="left:461px;top:364px;width:930px;height:18px;background:#dee1e6"></div>
<div class="a" style="left:461px;top:364px;width:8px;height:42px;background:#dee1e6;border-radius:0 0 8px 0"></div>
<div class="a" style="left:709px;top:364px;width:682px;height:42px;background:#dee1e6;border-radius:0 0 0 8px"></div>
<div class="a" style="left:469px;top:372px;width:240px;height:34px;background:#fff;border-radius:8px 8px 0 0"></div>
<div class="t" style="left:505.6px;top:383px;font-size:12.5px;color:#202124;transform:scaleX(0.9453);transform-origin:0 0">budgetMdy1 (1).xlsx</div>
<div class="a" style="left:570px;top:410px;width:648px;height:28px;background:#f1f3f4;border-radius:14px"></div>
<div class="a" style="left:461px;top:442px;width:930px;height:1px;background:#dadce0"></div>
<div class="t" style="left:604px;top:417px;font-size:14px;color:#5f6368">File</div>
<div class="a" style="left:631px;top:416px;width:1px;height:16px;background:#9aa0a6"></div>
<div class="t" style="left:641.5px;top:417px;font-size:14px;color:#202124;transform:scaleX(0.9962);transform-origin:0 0">C:/Users/myoung/Downloads/budgetMdy1%20(1).xlsx</div>
<div class="a" style="left:461px;top:443px;width:40px;height:60px;background:#1b7f3b"></div>
<div class="t" style="left:521px;top:452px;font-size:18px;color:#222">budgetMdy1 (1).xlsx</div>
<div class="t" style="left:521px;top:480px;font-size:13.5px;color:#222">File</div>
<div class="t" style="left:558px;top:480px;font-size:13.5px;color:#222">Edit</div>
<div class="t" style="left:596px;top:480px;font-size:13.5px;color:#222">Insert</div>
<div class="t" style="left:645px;top:480px;font-size:13.5px;color:#222">Format</div>
<div class="t" style="left:702px;top:480px;font-size:13.5px;color:#222">Help</div>
<div class="a" style="left:1164px;top:458px;width:93px;height:31px;background:#f1f1f1;border:1px solid #d2d2d2;border-radius:2px"></div>
<div class="t" style="left:1193.7px;top:466px;font-size:12.5px;color:#222;transform:scaleX(0.9282);transform-origin:0 0">Download</div>
<div class="a" style="left:1266px;top:458px;width:72px;height:31px;background:#3a83e8;border:1px solid #2f75d6;border-radius:2px"></div>
<div class="t" style="left:1296.7px;top:466px;font-size:12.5px;font-weight:bold;color:#fff;transform:scaleX(0.8432);transform-origin:0 0">Share</div>
<div class="a" style="left:461px;top:502px;width:930px;height:36px;background:#f3f3f3;border-top:1px solid #e3e3e3;border-bottom:1px solid #d6d6d6"></div>
<div class="a" style="left:575px;top:503px;width:1px;height:34px;background:#e0e0e0"></div>
<div class="a" style="left:637px;top:503px;width:1px;height:34px;background:#e0e0e0"></div>
<div class="a" style="left:750px;top:503px;width:1px;height:34px;background:#e0e0e0"></div>
<div class="a" style="left:806px;top:503px;width:1px;height:34px;background:#e0e0e0"></div>
<div class="a" style="left:955px;top:503px;width:1px;height:34px;background:#e0e0e0"></div>
<div class="a" style="left:1005px;top:503px;width:1px;height:34px;background:#e0e0e0"></div>
<div class="a" style="left:1050px;top:503px;width:1px;height:34px;background:#e0e0e0"></div>
<div class="a" style="left:1099px;top:503px;width:1px;height:34px;background:#e0e0e0"></div>
<div class="a" style="left:1135px;top:503px;width:1px;height:34px;background:#e0e0e0"></div>
<div class="t" style="left:649px;top:515px;font-size:12.5px;color:#222;transform:scaleX(0.9679);transform-origin:0 0">Calibri</div>
<div class="t" style="left:762px;top:515px;font-size:12.5px;color:#222">16</div>
<div class="a" style="left:461px;top:538px;width:930px;height:29px;background:#f3f3f3"></div>
<div class="a" style="left:497px;top:542px;width:884px;height:22px;background:#fff;border:1px solid #cfcfcf;border-radius:2px"></div>
<div class="t" style="left:504.2px;top:546px;font-size:14.5px;color:#222;transform:scaleX(1.0120);transform-origin:0 0">Licensing</div>
<div class="t" style="left:471.5px;top:545px;font-size:16.5px;font-style:italic;font-family:'Liberation Serif';color:#5a5a5a;-webkit-text-stroke:.3px #5a5a5a">f</div>
<div class="t" style="left:480.5px;top:541.5px;font-size:12.5px;font-style:italic;font-family:'Liberation Serif';color:#5a5a5a">x</div>
<div class="a" style="left:461px;top:566px;width:916px;height:526px;background:#fff"></div>
<div class="a" style="left:461px;top:566px;width:916px;height:19px;background:#f3f3f3;border-top:1px solid #d0d0d0;border-bottom:1px solid #c6c6c6"></div>
<div class="a" style="left:501px;top:567px;width:91px;height:17px;background:#c6c6c6"></div>
<div class="a" style="left:461px;top:585px;width:41px;height:507px;background:#f3f3f3;border-right:1px solid #c6c6c6"></div>
<div class="a" style="left:461px;top:690px;width:40px;height:26px;background:#c6c6c6"></div>
<svg style="left:0;top:0" width="1916" height="1109">
<path d="M592.5 567 V1092" stroke="#d4d4d4" stroke-width="1"/>
<path d="M719.5 567 V1092" stroke="#d4d4d4" stroke-width="1"/>
<path d="M777.5 567 V1092" stroke="#d4d4d4" stroke-width="1"/>
<path d="M836.5 567 V1092" stroke="#d4d4d4" stroke-width="1"/>
<path d="M894.5 567 V1092" stroke="#d4d4d4" stroke-width="1"/>
<path d="M953.5 567 V1092" stroke="#d4d4d4" stroke-width="1"/>
<path d="M1011.5 567 V1092" stroke="#d4d4d4" stroke-width="1"/>
<path d="M1069.5 567 V1092" stroke="#d4d4d4" stroke-width="1"/>
<path d="M1128.5 567 V1092" stroke="#d4d4d4" stroke-width="1"/>
<path d="M1186.5 567 V1092" stroke="#d4d4d4" stroke-width="1"/>
<path d="M1245.5 567 V1092" stroke="#d4d4d4" stroke-width="1"/>
<path d="M1303.5 567 V1092" stroke="#d4d4d4" stroke-width="1"/>
<path d="M1361.5 567 V1092" stroke="#d4d4d4" stroke-width="1"/>
<path d="M1376.5 567 V1092" stroke="#d4d4d4" stroke-width="1"/>
<path d="M461 624.5 H1377" stroke="#d4d4d4" stroke-width="1"/>
<path d="M461 643.5 H1377" stroke="#d4d4d4" stroke-width="1"/>
<path d="M461 662.5 H1377" stroke="#d4d4d4" stroke-width="1"/>
<path d="M461 689.5 H1377" stroke="#d4d4d4" stroke-width="1"/>
<path d="M461 716.5 H1377" stroke="#d4d4d4" stroke-width="1"/>
<path d="M461 743.5 H1377" stroke="#d4d4d4" stroke-width="1"/>
<path d="M461 773.5 H1377" stroke="#d4d4d4" stroke-width="1"/>
<path d="M461 792.5 H1377" stroke="#d4d4d4" stroke-width="1"/>
<path d="M461 811.5 H1377" stroke="#d4d4d4" stroke-width="1"/>
<path d="M461 830.5 H1377" stroke="#d4d4d4" stroke-width="1"/>
<path d="M461 849.5 H1377" stroke="#d4d4d4" stroke-width="1"/>
<path d="M461 868.5 H1377" stroke="#d4d4d4" stroke-width="1"/>
<path d="M461 887.5 H1377" stroke="#d4d4d4" stroke-width="1"/>
<path d="M461 906.5 H1377" stroke="#d4d4d4" stroke-width="1"/>
<path d="M461 925.5 H1377" stroke="#d4d4d4" stroke-width="1"/>
<path d="M461 944.5 H1377" stroke="#d4d4d4" stroke-width="1"/>
<path d="M461 963.5 H1377" stroke="#d4d4d4" stroke-width="1"/>
<path d="M461 982.5 H1377" stroke="#d4d4d4" stroke-width="1"/>
<path d="M461 1001.5 H1377" stroke="#d4d4d4" stroke-width="1"/>
<path d="M461 1020.5 H1377" stroke="#d4d4d4" stroke-width="1"/>
<path d="M461 1039.5 H1377" stroke="#d4d4d4" stroke-width="1"/>
<path d="M461 1058.5 H1377" stroke="#d4d4d4" stroke-width="1"/>
<path d="M461 1077.5 H1377" stroke="#d4d4d4" stroke-width="1"/>
</svg>
<div class="a" style="left:502px;top:585px;width:392px;height:39px;background:#fff"></div>
<div class="t" style="left:536.5px;width:20px;text-align:center;top:570px;font-size:13px;color:#222">A</div>
<div class="t" style="left:645.5px;width:20px;text-align:center;top:570px;font-size:13px;color:#222">B</div>
<div class="t" style="left:738.0px;width:20px;text-align:center;top:570px;font-size:13px;color:#222">C</div>
<div class="t" style="left:796.5px;width:20px;text-align:center;top:570px;font-size:13px;color:#222">D</div>
<div class="t" style="left:855.0px;width:20px;text-align:center;top:570px;font-size:13px;color:#222">E</div>
<div class="t" style="left:913.5px;width:20px;text-align:center;top:570px;font-size:13px;color:#222">F</div>
<div class="t" style="left:972.0px;width:20px;text-align:center;top:570px;font-size:13px;color:#222">G</div>
<div class="t" style="left:1030.0px;width:20px;text-align:center;top:570px;font-size:13px;color:#222">H</div>
<div class="t" style="left:1088.5px;width:20px;text-align:center;top:570px;font-size:13px;color:#222">I</div>
<div class="t" style="left:1147.0px;width:20px;text-align:center;top:570px;font-size:13px;color:#222">J</div>
<div class="t" style="left:1205.5px;width:20px;text-align:center;top:570px;font-size:13px;color:#222">K</div>
<div class="t" style="left:1264.0px;width:20px;text-align:center;top:570px;font-size:13px;color:#222">L</div>
<div class="t" style="left:1322.0px;width:20px;text-align:center;top:570px;font-size:13px;color:#222">M</div>
<div class="t" style="left:461px;width:40px;text-align:center;top:599.0px;font-size:13px;color:#222">1</div>
<div class="t" style="left:461px;width:40px;text-align:center;top:628.5px;font-size:13px;color:#222">2</div>
<div class="t" style="left:461px;width:40px;text-align:center;top:647.5px;font-size:13px;color:#222">3</div>
<div class="t" style="left:461px;width:40px;text-align:center;top:670.5px;font-size:13px;color:#222">4</div>
<div class="t" style="left:461px;width:40px;text-align:center;top:697.5px;font-size:13px;color:#222">5</div>
<div class="t" style="left:461px;width:40px;text-align:center;top:724.5px;font-size:13px;color:#222">6</div>
<div class="t" style="left:461px;width:40px;text-align:center;top:753.0px;font-size:13px;color:#222">7</div>
<div class="t" style="left:461px;width:40px;text-align:center;top:777.5px;font-size:13px;color:#222">8</div>
<div class="t" style="left:461px;width:40px;text-align:center;top:796.5px;font-size:13px;color:#222">9</div>
<div class="t" style="left:461px;width:40px;text-align:center;top:815.5px;font-size:13px;color:#222">10</div>
<div class="t" style="left:461px;width:40px;text-align:center;top:834.5px;font-size:13px;color:#222">11</div>
<div class="t" style="left:461px;width:40px;text-align:center;top:853.5px;font-size:13px;color:#222">12</div>
<div class="t" style="left:461px;width:40px;text-align:center;top:872.5px;font-size:13px;color:#222">13</div>
<div class="t" style="left:461px;width:40px;text-align:center;top:891.5px;font-size:13px;color:#222">14</div>
<div class="t" style="left:461px;width:40px;text-align:center;top:910.5px;font-size:13px;color:#222">15</div>
<div class="t" style="left:461px;width:40px;text-align:center;top:929.5px;font-size:13px;color:#222">16</div>
<div class="t" style="left:461px;width:40px;text-align:center;top:948.5px;font-size:13px;color:#222">17</div>
<div class="t" style="left:461px;width:40px;text-align:center;top:967.5px;font-size:13px;color:#222">18</div>
<div class="t" style="left:461px;width:40px;text-align:center;top:986.5px;font-size:13px;color:#222">19</div>
<div class="t" style="left:461px;width:40px;text-align:center;top:1005.5px;font-size:13px;color:#222">20</div>
<div class="t" style="left:461px;width:40px;text-align:center;top:1024.5px;font-size:13px;color:#222">21</div>
<div class="t" style="left:461px;width:40px;text-align:center;top:1043.5px;font-size:13px;color:#222">22</div>
<div class="t" style="left:461px;width:40px;text-align:center;top:1062.5px;font-size:13px;color:#222">23</div>
<div class="t" style="left:461px;width:40px;text-align:center;top:1081.5px;font-size:13px;color:#222">24</div>
<div class="t" style="left:565.3px;top:592px;font-size:27px;color:#111;transform:scaleX(1.0535);transform-origin:0 0">Sample 2023 Budget</div>
<div class="t" style="left:505.9px;top:667px;font-size:19px;color:#111;transform:scaleX(1.0088);transform-origin:0 0">Hardware</div>
<div class="t" style="left:614.6px;top:667px;font-size:19px;color:#111;transform:scaleX(1.0043);transform-origin:0 0">$20,000.00</div>
<div class="t" style="left:505.9px;top:694px;font-size:19px;color:#111;transform:scaleX(0.9728);transform-origin:0 0"><span>Licensing</span></div>
<div class="t" style="left:614.6px;top:694px;font-size:19px;color:#111;transform:scaleX(1.0043);transform-origin:0 0">$30,000.00</div>
<div class="t" style="left:505.9px;top:721px;font-size:19px;color:#111;transform:scaleX(0.9457);transform-origin:0 0">Services</div>
<div class="t" style="left:614.6px;top:721px;font-size:19px;color:#111;transform:scaleX(1.0043);transform-origin:0 0">$25,000.00</div>
<div class="t" style="left:505.9px;top:748px;font-size:21px;font-weight:bold;color:#222;transform:scaleX(0.9628);transform-origin:0 0">Total</div>
<div class="t" style="left:601.6px;top:748px;font-size:21px;font-weight:bold;color:#222;transform:scaleX(1.0323);transform-origin:0 0">$75,000.00</div>
<div class="a" style="left:501px;top:689px;width:92px;height:28px;border:2px solid #1a8fe0"></div>
<div class="a" style="left:1377px;top:567px;width:14px;height:525px;background:#f3f3f3;border-left:1px solid #d6d6d6"></div>
<div class="a" style="left:1378px;top:585px;width:12px;height:40px;background:#c6c6c6"></div>
<div class="a" style="left:461px;top:1092px;width:930px;height:14px;background:#f3f3f3;border-top:1px solid #a9a9a9"></div>
<div class="a" style="left:501px;top:1093px;width:48px;height:13px;background:#c6c6c6"></div>
<div class="a" style="left:461px;top:1106px;width:930px;height:3px;background:#e5e5e5"></div>
<div class="a" style="left:461px;top:1105px;width:64px;height:6px;border:2px solid #222;border-radius:3px 3px 0 0;background:#fff"></div>
<svg style="left:0;top:0" width="1916" height="1109">
<circle cx="489" cy="389" r="7" fill="#5f6368"/><path d="M485 384 Q488 386 487 389 Q484 390 483.5 392 M491 383 Q490 386 493 387 Q495 389 494 393 M489 396 Q489 392 491 391" stroke="#fff" stroke-width="1.3" fill="none"/>
<path d="M688 384 L696 392 M696 384 L688 392" stroke="#3c4043" stroke-width="1.4"/>
<path d="M730.5 383 V395 M724.5 389 H736.5" stroke="#3c4043" stroke-width="1.6"/>
<path d="M1224 375 L1230 381 L1236 375" stroke="#3c4043" stroke-width="1.1" fill="none"/>
<path d="M1270 378.5 H1281" stroke="#3c4043" stroke-width="1.1"/>
<rect x="1316.5" y="373.5" width="9" height="9" fill="none" stroke="#3c4043" stroke-width="1.1"/>
<path d="M1362 373 L1373 384 M1373 373 L1362 384" stroke="#3c4043" stroke-width="1.1"/>
<path d="M490 424 H477 M483 417.5 L476.5 424 L483 430.5" stroke="#b1b3b6" stroke-width="2" fill="none"/>
<path d="M507 424 H520 M514 417.5 L520.5 424 L514 430.5" stroke="#b1b3b6" stroke-width="2" fill="none"/>
<path d="M553.5 420 A7 7 0 1 0 554 425" stroke="#5f6368" stroke-width="2" fill="none"/><path d="M549 417 L555 417 L555 423 Z" fill="#5f6368"/>
<circle cx="587" cy="424" r="6.3" stroke="#5f6368" stroke-width="1.4" fill="none"/><path d="M587 422 V428" stroke="#5f6368" stroke-width="1.5"/><circle cx="587" cy="419.8" r=".9" fill="#5f6368"/>
<path d="M1162.8 422 V430 H1174.5 V428" stroke="#5f6368" stroke-width="1.4" fill="none"/><path d="M1165.5 427.5 C1166.5 422.5 1169.5 421.5 1173 421.5 V418.5 L1177.5 423 L1173 427.5 V424.8 C1169.8 424.8 1167.5 425.6 1165.5 427.5 Z" stroke="#5f6368" stroke-width="1.2" fill="none" stroke-linejoin="round"/>
<path d="M1201 418 L1203 422.4 L1207.7 422.8 L1204.1 425.9 L1205.2 430.4 L1201 428 L1196.8 430.4 L1197.9 425.9 L1194.3 422.8 L1199 422.4 Z" stroke="#5f6368" stroke-width="1.4" fill="none" stroke-linejoin="round"/>
<circle cx="1240" cy="423" r="7" fill="#9aa0a6"/><path d="M1236 428 L1241 433 L1242 428Z" fill="#9aa0a6"/>
<path d="M1266 419 H1270 A2.5 2.5 0 0 1 1275 419 H1279 V423 A2.5 2.5 0 0 1 1279 428 V432 H1275 A2.5 2.5 0 0 0 1270 432 H1266 V428 A2.5 2.5 0 0 0 1266 423 Z" fill="#5f6368"/>
<rect x="1299" y="418" width="12" height="12" fill="none" stroke="#5f6368" stroke-width="1.8"/><rect x="1304.5" y="418" width="6.5" height="12" fill="#5f6368"/>
<circle cx="1337" cy="424" r="11" fill="#0b57a0"/>
<circle cx="1369.5" cy="419" r="1.6" fill="#5f6368"/><circle cx="1369.5" cy="424.2" r="1.6" fill="#5f6368"/><circle cx="1369.5" cy="429.4" r="1.6" fill="#5f6368"/>
<rect x="1175.8" y="464" width="4.6" height="5.5" fill="#333"/><path d="M1171.2 469 H1185 L1178.1 476 Z" fill="#333"/><path d="M1170.2 478.2 H1186" stroke="#333" stroke-width="1.4"/>
<path d="M1277.2 471 V469 A3.3 3.3 0 0 1 1283.8 469 V471" stroke="#fff" stroke-width="1.7" fill="none"/><rect x="1275.8" y="470.8" width="9.3" height="6.2" rx=".8" fill="#fff"/><circle cx="1280.4" cy="473.9" r="1.2" fill="#3a83e8"/>
<path d="M538.5 524 Q535.5 517.5 528.5 519.5" stroke="#b8b8b8" stroke-width="2.4" fill="none"/><path d="M523.8 522 L529.5 516.6 L530.3 523.4Z" fill="#b8b8b8"/>
<path d="M550.5 524 Q553.5 517.5 560.5 519.5" stroke="#b8b8b8" stroke-width="2.4" fill="none"/><path d="M565.2 522 L559.5 516.6 L558.7 523.4Z" fill="#b8b8b8"/>
<circle cx="592" cy="519" r="4.9" stroke="#111" stroke-width="1.6" fill="none"/><path d="M595.6 522.6 L599.3 526.3" stroke="#111" stroke-width="2.2" stroke-linecap="round"/><path d="M592 516.4 V521.6 M589.4 519 H594.6" stroke="#111" stroke-width="1.3"/>
<circle cx="617.8" cy="519" r="4.9" stroke="#111" stroke-width="1.6" fill="none"/><path d="M621.4 522.6 L625.1 526.3" stroke="#111" stroke-width="2.2" stroke-linecap="round"/><path d="M615.2 519 H620.4" stroke="#111" stroke-width="1.4"/>
<path d="M732.0 520 H737.0 L734.5 523.2Z" fill="#222"/>
<path d="M787.8 520 H792.8 L790.3 523.2Z" fill="#222"/>
<path d="M936.4000000000001 520 H943.0 L939.7 523.8Z" fill="#111"/>
<path d="M985.3000000000001 520 H991.9 L988.6 523.8Z" fill="#111"/>
<path d="M1035.0 520 H1042.0 L1038.5 524.3Z" fill="#111"/>
<path d="M1083.0 520 H1090.0 L1086.5 524.3Z" fill="#aaa"/>
<path d="M1166.0 520 H1173.0 L1169.5 524.3Z" fill="#111"/>
<text x="816.5" y="525" font-family="Liberation Sans" font-weight="bold" font-size="13" fill="#111" stroke="#111" stroke-width=".4">B</text>
<path d="M845.5 516.3 H852.3 M849.8 516.3 L844.6 524.7 M842 524.7 H848.5" stroke="#111" stroke-width="1.7" fill="none"/>
<path d="M868.4 515.2 V520.6 Q868.4 523.8 872.1 523.8 Q875.8 523.8 875.8 520.6 V515.2" stroke="#111" stroke-width="1.5" fill="none"/><path d="M867.3 526.4 H877" stroke="#111" stroke-width="1.1"/>
<text x="892.5" y="525" font-family="Liberation Sans" font-weight="bold" font-size="12.5" fill="#111">S</text><path d="M891.5 520.2 H902.8" stroke="#111" stroke-width="1.2"/>
<path d="M917.3 524 L921.9 514 L926.5 524 M919 520.5 H924.8" stroke="#111" stroke-width="1.3" fill="none"/><rect x="913" y="526" width="19" height="3.8" fill="#111"/>
<path d="M965.8 520.8 L971.6 515 L977.3 520.7 L971.5 526.5 Z" fill="#111"/><path d="M966.5 515.5 L971.6 515 L977 520.5" stroke="#111" stroke-width="1.2" fill="none"/><path d="M964.5 512.8 L971 519.3" stroke="#1a2740" stroke-width="1"/><path d="M976.5 522.5 Q974.6 525 976.5 526.8 Q978.4 525 976.5 522.5Z" fill="#777"/>
<rect x="1015.5" y="515.3" width="12.2" height="12.2" fill="none" stroke="#111" stroke-width="1.2"/><path d="M1021.6 515.3 V527.5 M1015.5 521.4 H1027.7" stroke="#111" stroke-width="1.1"/>
<path d="M1065 515.5 H1058.5 V527.5 H1065 M1068.5 515.5 H1075.5 V527.5 H1068.5 M1065 515.5 V527.5 M1068.5 515.5 V527.5" stroke="#c6c6c6" stroke-width="1" fill="none"/><path d="M1060 521.5 H1064 M1069.5 521.5 H1074" stroke="#c6c6c6" stroke-width="1"/><path d="M1063.5 519.5 L1065.8 521.5 L1063.5 523.5Z M1070 519.5 L1067.7 521.5 L1070 523.5Z" fill="#c6c6c6"/>
<path d="M1110 514.5 H1124 M1110 518.5 H1124 M1110 522.5 H1121 M1110 526.5 H1116" stroke="#111" stroke-width="1.3" fill="none"/><path d="M1121 522.5 Q1124.5 522.5 1124.5 525 Q1124.5 527.3 1120 527.3" stroke="#111" stroke-width="1.3" fill="none"/><path d="M1121 525 L1117.8 527.3 L1121 529.6Z" fill="#111"/>
<path d="M1145.2 516.3 H1159.1 M1145.2 518.4 H1155 M1145.2 520.5 H1159.1 M1145.2 522.6 H1155 M1145.2 524.6 H1159.1 M1145.2 526.7 H1155" stroke="#111" stroke-width="1.1"/>
<path d="M1380.5 1072 L1384 1068 L1387.5 1072Z M1380.5 1082 L1384 1086 L1387.5 1082Z" fill="#555"/>
<path d="M1377 1063.5 H1391 M1377 1077.5 H1391" stroke="#c9c9c9"/>
<path d="M1357 1095.5 L1353 1099 L1357 1102.5Z M1370 1095.5 L1374 1099 L1370 1102.5Z" fill="#555"/>
<path d="M1348.5 1093 V1106 M1362.5 1093 V1106" stroke="#c9c9c9"/>
<path d="M473 461 H477.8 L491 482 H486.2 Z" fill="#fff"/><path d="M486.2 461 H491 L481 475 L478.8 478.4 H482.3 V482 H472 Z" fill="#fff"/>
</svg>
<div class="t" style="left:1331px;top:417px;font-size:14px;color:#fff">M</div></body></html>
